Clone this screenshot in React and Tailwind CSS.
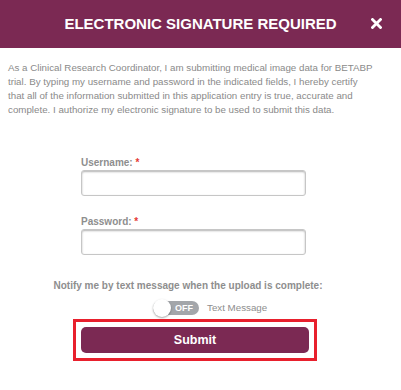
import React from "react";

const App = () => {
  return (
    <div className="w-[401px] h-[390px] bg-white font-['Liberation_Sans',Arial,sans-serif] overflow-hidden">
      <div className="relative flex justify-center items-center h-[48px] bg-[#7b2953]">
        <h2 className="text-[15px] font-bold text-white tracking-normal">
          ELECTRONIC SIGNATURE REQUIRED
        </h2>
        <button className="absolute right-[19px] top-[18px] w-[11px] h-[11px]">
          <svg viewBox="0 0 11 11" className="w-[11px] h-[11px]">
            <path d="M1.5 1.5 L9.5 9.5 M9.5 1.5 L1.5 9.5" stroke="white" strokeWidth="2.8" strokeLinecap="square" />
          </svg>
        </button>
      </div>

      <p className="px-[8px] pt-[13px] text-[9.75px] leading-[14px] text-[#8a8a8a] whitespace-nowrap">
        As a Clinical Research Coordinator, I am submitting medical image data for BETABP
        <br />
        trial. By typing my username and password in the indicated fields, I hereby certify
        <br />
        that all of the information submitted in this application entry is true, accurate and
        <br />
        complete. I authorize my electronic signature to be used to submit this data.
      </p>

      <form className="ml-[81px] w-[225px] mt-[39px]">
        <div className="flex flex-col">
          <label htmlFor="username" className="text-[10px] leading-[14px] font-bold text-[#8e8e8e]">
            Username: <span className="text-[#e53935]">*</span>
          </label>
          <input
            id="username"
            type="text"
            className="w-full h-[26px] border border-[#c6c6c6] rounded-[3px] shadow-[inset_0_1px_2px_rgba(0,0,0,0.3)] focus:outline-none"
          />
        </div>
        <div className="flex flex-col mt-[19px]">
          <label htmlFor="password" className="text-[10px] leading-[14px] font-bold text-[#8e8e8e]">
            Password: <span className="text-[#e53935]">*</span>
          </label>
          <input
            id="password"
            type="password"
            className="w-full h-[26px] border border-[#c6c6c6] rounded-[3px] shadow-[inset_0_1px_2px_rgba(0,0,0,0.3)] focus:outline-none"
          />
        </div>
      </form>

      <p className="w-[376px] mt-[24px] text-center text-[10px] leading-[14px] font-bold text-[#8e8e8e] whitespace-nowrap">
        Notify me by text message when the upload is complete:
      </p>

      <div className="flex items-center gap-[8px] pl-[153px] mt-[6px] h-[18px]">
        <div className="relative w-[46px] h-[14px] rounded-full bg-[#a3a6aa] flex items-center justify-end pr-[6px]">
          <span className="absolute left-0 top-[-2px] w-[18px] h-[18px] rounded-full bg-white shadow-[0_1px_2px_rgba(0,0,0,0.35)]" />
          <span className="text-[9px] font-bold text-white leading-none">OFF</span>
        </div>
        <span className="text-[9.75px] text-[#8e8e8e]">Text Message</span>
      </div>

      <div className="ml-[73px] mt-[2px] w-[244px] h-[42px] border-[3px] border-[#e8202d] p-[5px]">
        <button
          type="submit"
          className="w-full h-full bg-[#7b2953] rounded-[5px] text-white font-bold text-[12.5px]"
        >
          Submit
        </button>
      </div>
    </div>
  );
};

export default App;
